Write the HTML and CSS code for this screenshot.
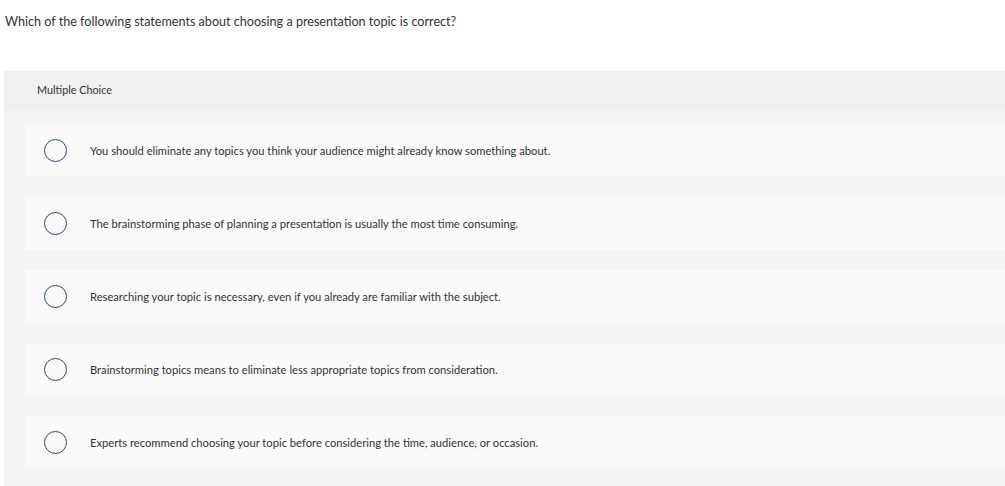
FILE: index.html
```html
<!DOCTYPE html>
<html lang="en">
<head>
    <meta charset="UTF-8">
    <title>Question</title>
    <link rel="stylesheet" href="styles.css">
</head>
<body>
    <p class="question">Which of the following statements about choosing a presentation topic is correct?</p>

    <div class="panel">
        <div class="panel-head">Multiple Choice</div>
        <div class="choices">
            <label class="choice"><span class="radio"></span><span>You should eliminate any topics you think your audience might already know something about.</span></label>
            <label class="choice"><span class="radio"></span><span>The brainstorming phase of planning a presentation is usually the most time consuming.</span></label>
            <label class="choice"><span class="radio"></span><span>Researching your topic is necessary, even if you already are familiar with the subject.</span></label>
            <label class="choice"><span class="radio"></span><span>Brainstorming topics means to eliminate less appropriate topics from consideration.</span></label>
            <label class="choice"><span class="radio"></span><span>Experts recommend choosing your topic before considering the time, audience, or occasion.</span></label>
        </div>
    </div>
</body>
</html>
```

FILE: styles.css
```css
body {
    margin: 0;
    font-family: Lato, "Open Sans", sans-serif;
    color: #333;
    background: #fff;
    overflow: hidden;
}
.question {
    margin: 0;
    padding: 14px 0 0 5px;
    font-size: 12.6px;
    line-height: 15px;
    height: 57px;
}
.panel {
    margin-left: 4px;
    width: 1010px;
    background: #f5f5f5;
}
.panel-head {
    background: #f0f0f0;
    height: 40px;
    padding-left: 33px;
    font-size: 10.8px;
    line-height: 38px;
    box-sizing: border-box;
}
.choices {
    display: flex;
    flex-direction: column;
    gap: 20px;
    padding: 13px 0 20px 21px;
}
.choice {
    display: flex;
    align-items: center;
    height: 53px;
    background: #fafafa;
    font-size: 11.2px;
    line-height: 13px;
}
.radio {
    width: 21px;
    height: 21px;
    border: 1.3px solid #2d4a6a;
    border-radius: 50%;
    margin: 0 23px 0 19px;
    flex-shrink: 0;
}
```
